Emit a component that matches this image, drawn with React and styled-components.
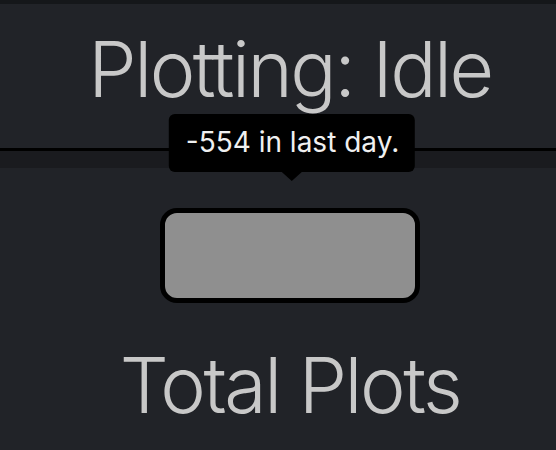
import React from "react";
import styled, { createGlobalStyle } from "styled-components";

const Global = createGlobalStyle`
  html, body { margin: 0; padding: 0; background: #212328; }
  body { font-family: Inter, "Noto Sans", sans-serif; }
`;

const Page = styled.div`
  width: 556px;
  height: 450px;
  background: #212328;
  overflow: hidden;
  display: flex;
  flex-direction: column;
`;

const TopStrip = styled.div`
  height: 4px;
  background: #15171a;
`;

const Header = styled.header`
  padding: 27px 0 40px 24px;
  border-bottom: 3px solid #000;
  display: flex;
  justify-content: center;
`;

const Band = styled.div`
  height: 17px;
  background: #1a1b1f;
`;

const Body = styled.main`
  padding: 40px 0 0 24px;
  display: flex;
  flex-direction: column;
  align-items: center;
`;

const BigTitle = styled.h1`
  margin: 0;
  font-family: Inter, "Noto Sans", sans-serif;
  font-weight: 350;
  font-size: 77px;
  line-height: 1;
  color: #c8c8c8;
  letter-spacing: -2.5px;
  white-space: nowrap;
`;

const Spacer = styled.div`
  height: ${(p) => p.$h}px;
`;

const BoxWrap = styled.div`
  position: relative;
`;

const ValueBox = styled.div`
  width: 260px;
  height: 95px;
  box-sizing: border-box;
  border: 5px solid #000;
  border-radius: 17px;
  background: #8f8f8f;
`;

const Tooltip = styled.div`
  position: absolute;
  left: 50%;
  bottom: calc(100% + 36px);
  transform: translateX(calc(-50% + 2px));
  height: 58px;
  box-sizing: border-box;
  padding: 0 16px 0 17px;
  background: #000;
  border-radius: 6px;
  color: #f0f0f0;
  font-family: Inter, "Noto Sans", sans-serif;
  font-size: 28px;
  line-height: 56px;
  white-space: nowrap;

  &::after {
    content: "";
    position: absolute;
    left: 50%;
    top: 100%;
    transform: translateX(-50%);
    border-left: 10px solid transparent;
    border-right: 10px solid transparent;
    border-top: 9px solid #000;
  }
`;

export default function App() {
  return (
    <Page>
      <Global />
      <TopStrip />
      <Header>
        <BigTitle>Plotting: Idle</BigTitle>
      </Header>
      <Band />
      <Body>
        <BoxWrap>
          <ValueBox />
          <Tooltip>-554 in last day.</Tooltip>
        </BoxWrap>
        <Spacer $h={44} />
        <BigTitle>Total Plots</BigTitle>
      </Body>
    </Page>
  );
}
